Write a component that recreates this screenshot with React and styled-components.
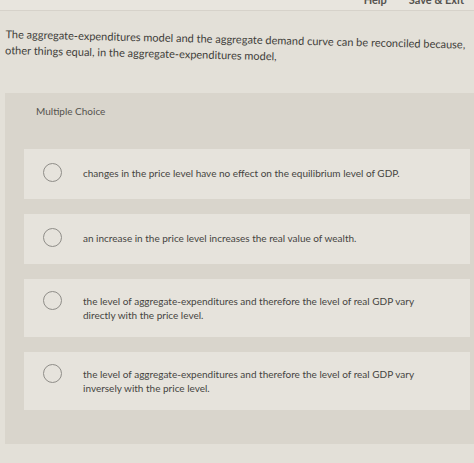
import styled, { createGlobalStyle } from "styled-components";

const GlobalStyle = createGlobalStyle`
  html, body {
    margin: 0;
    padding: 0;
    background: #e3e0d8;
    font-family: Lato, "Open Sans", sans-serif;
    color: #454440;
  }
`;

const Page = styled.div`
  width: 474px;
  height: 463px;
  overflow: hidden;
  background: #e3e0d8;
`;

const TopBar = styled.header`
  height: 10px;
  display: flex;
  justify-content: flex-end;
  align-items: flex-end;
  gap: 22px;
  padding-right: 10px;
  overflow: hidden;
  background: #e8e5de;
  border-bottom: 1px solid #d6d2ca;
`;

const TopLink = styled.span`
  font-size: 11px;
  font-weight: 700;
  line-height: 11px;
  margin-bottom: 5px;
  color: #55534f;
`;

const Question = styled.p`
  margin: 0;
  padding: 15px 0 0 6px;
  font-size: 11px;
  line-height: 16px;
  color: #3f3e3a;
  transform: rotate(1.3deg);
  transform-origin: 0 0;
`;

const Panel = styled.section`
  margin: 35px 0 0 5px;
  padding: 12px 4px 34px 19px;
  background: #d9d5cc;
`;

const PanelTitle = styled.div`
  margin-left: 12px;
  font-size: 10px;
  line-height: 12px;
  color: #55534e;
`;

const Options = styled.div`
  display: flex;
  flex-direction: column;
  gap: 15px;
  margin-top: 32px;
`;

const Option = styled.label`
  display: flex;
  align-items: flex-start;
  gap: 21px;
  padding: ${(props) => (props.wrapLines ? "15px" : "17px")} 20px ${(props) => (props.wrapLines ? "15px" : "17px")} 19px;
  background: #e6e3dc;
`;

const Radio = styled.span`
  flex: none;
  width: 19px;
  height: 19px;
  margin-top: -3px;
  border: 1px solid #8f8d88;
  border-radius: 50%;
  box-sizing: border-box;
`;

const OptionText = styled.span`
  max-width: 340px;
  font-size: 10px;
  line-height: 14px;
  color: #45443f;
`;

const choices = [
  "changes in the price level have no effect on the equilibrium level of GDP.",
  "an increase in the price level increases the real value of wealth.",
  "the level of aggregate-expenditures and therefore the level of real GDP vary directly with the price level.",
  "the level of aggregate-expenditures and therefore the level of real GDP vary inversely with the price level.",
];

export default function App() {
  return (
    <Page>
      <GlobalStyle />
      <TopBar>
        <TopLink>Help</TopLink>
        <TopLink>Save &amp; Exit</TopLink>
      </TopBar>
      <Question>
        The aggregate-expenditures model and the aggregate demand curve can be reconciled because, other things equal, in the aggregate-expenditures model,
      </Question>
      <Panel>
        <PanelTitle>Multiple Choice</PanelTitle>
        <Options>
          {choices.map((text) => (
            <Option key={text} wrapLines={text.length > 80}>
              <Radio />
              <OptionText>{text}</OptionText>
            </Option>
          ))}
        </Options>
      </Panel>
    </Page>
  );
}
